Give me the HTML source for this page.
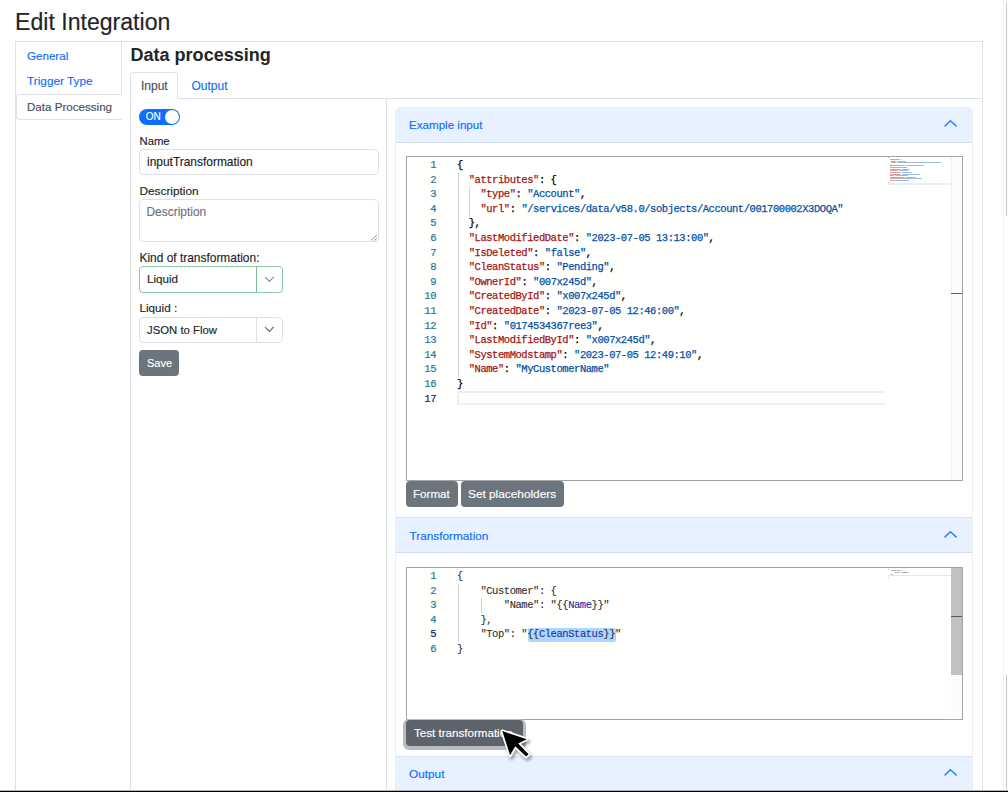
<!DOCTYPE html>
<html><head><meta charset="utf-8">
<style>
html,body{margin:0;padding:0;background:#fff;width:1008px;height:792px;overflow:hidden;position:relative;font-family:"Liberation Sans",sans-serif;color:#212529;}
.a{position:absolute;}
.t{position:absolute;white-space:nowrap;line-height:1;-webkit-text-stroke:0.15px currentColor;}
.bd{border:1px solid #dee2e6;box-sizing:border-box;}
.lnk{color:#0d6efd;}
.btn{position:absolute;background:#6c757d;border-radius:4px;color:#fff;box-sizing:border-box;}
.ed{position:absolute;background:#fffffe;border:1px solid #a4a4a4;box-sizing:border-box;overflow:hidden;}
.code{position:absolute;font-family:"Liberation Mono",monospace;font-size:10.5px;letter-spacing:-0.45px;line-height:14.59px;white-space:pre;color:#000;-webkit-text-stroke:0.25px currentColor;}
.ln{position:absolute;font-family:"Liberation Mono",monospace;font-size:10.5px;letter-spacing:-0.45px;line-height:14.59px;white-space:pre;color:#237893;text-align:right;-webkit-text-stroke:0.2px currentColor;}
.k{color:#a31515;}
.s{color:#0451a5;}
.v{color:#1f2f99;}
.ig{position:absolute;width:1px;background:#d3d3d3;}
.ah{position:absolute;background:#e7f1ff;box-shadow:inset 0 -1px 0 rgba(0,0,0,.08);}
.ach{position:absolute;width:14px;height:8px;}
</style></head><body>

<!-- Title -->
<div class="t" style="left:15px;top:11px;font-size:23.1px;">Edit Integration</div>

<!-- Outer card -->
<div class="a bd" style="left:15px;top:41px;width:968px;height:800px;"></div>

<!-- left nav -->
<div class="a" style="left:121px;top:42px;width:1px;height:52px;background:#dee2e6;"></div>
<div class="t lnk" style="left:27px;top:50px;font-size:11.6px;">General</div>
<div class="t lnk" style="left:27px;top:76px;font-size:11.8px;">Trigger Type</div>
<div class="a" style="left:16px;top:94px;width:106px;height:26px;border:1px solid #dee2e6;border-right:0;border-radius:4px 0 0 4px;box-sizing:border-box;background:#fff;"></div>
<div class="t" style="left:27px;top:101px;font-size:11.6px;color:#495057;">Data Processing</div>

<!-- content -->
<div class="t" style="left:130.5px;top:46px;font-size:18.05px;font-weight:bold;-webkit-text-stroke:0px;">Data processing</div>
<!-- tabs -->
<div class="a" style="left:130px;top:72px;width:48px;height:27px;border:1px solid #dee2e6;border-bottom:0;border-radius:4px 4px 0 0;box-sizing:border-box;background:#fff;"></div>
<div class="t" style="left:141px;top:80px;font-size:12px;color:#495057;">Input</div>
<div class="t lnk" style="left:191.5px;top:80px;font-size:12px;">Output</div>
<!-- tab content border -->
<div class="a" style="left:178px;top:98px;width:805px;height:1px;background:#dee2e6;"></div>
<div class="a" style="left:130px;top:98px;width:1px;height:700px;background:#dee2e6;"></div>
<div class="a" style="left:386px;top:99px;width:1px;height:700px;background:#dee2e6;"></div>

<!-- form -->
<div class="a" style="left:139px;top:109px;width:41px;height:16px;border-radius:8px;background:#0d6efd;"></div>
<div class="a" style="left:165px;top:110px;width:14px;height:14px;border-radius:50%;background:#fff;"></div>
<div class="t" style="left:145.8px;top:112.2px;font-size:10px;color:#fff;">ON</div>

<div class="t" style="left:139.5px;top:136px;font-size:11.3px;">Name</div>
<div class="a" style="left:139px;top:149px;width:240px;height:26px;border:1px solid #dee2e6;border-radius:4px;box-sizing:border-box;"></div>
<div class="t" style="left:147px;top:157px;font-size:11.95px;">inputTransformation</div>

<div class="t" style="left:139.5px;top:186px;font-size:11.8px;">Description</div>
<div class="a" style="left:139px;top:199px;width:240px;height:43px;border:1px solid #dee2e6;border-radius:4px;box-sizing:border-box;"></div>
<div class="t" style="left:146.5px;top:207px;font-size:11.95px;color:#6c757d;">Description</div>
<svg class="a" style="left:368px;top:232px;width:12px;height:12px;" viewBox="0 0 12 12"><path d="M3 8.3 L8.7 3.3 M6.3 8.3 L8.7 6.3" fill="none" stroke="#9a9a9a" stroke-width="1" stroke-linecap="round"/></svg>

<div class="t" style="left:139.5px;top:253px;font-size:11.93px;">Kind of transformation:</div>
<div class="a" style="left:139px;top:266px;width:144px;height:26.5px;border:1px solid #8cc5a5;border-radius:4px;box-sizing:border-box;"></div>
<div class="a" style="left:256px;top:267px;width:1px;height:25px;background:#7dbb98;"></div>
<svg class="a" style="left:264px;top:276px;width:11px;height:7px;" viewBox="0 0 11 7"><path d="M1 1.1 L5.4 5.3 L9.75 0.9" fill="none" stroke="#8a8f96" stroke-width="1.2"/></svg>
<div class="t" style="left:147px;top:273px;font-size:11.65px;">Liquid</div>

<div class="t" style="left:139.5px;top:302.4px;font-size:11.7px;">Liquid :</div>
<div class="a" style="left:139px;top:317px;width:144px;height:26px;border:1px solid #dee2e6;border-radius:4px;box-sizing:border-box;"></div>
<div class="a" style="left:256px;top:318px;width:1px;height:24px;background:#dee2e6;"></div>
<svg class="a" style="left:264px;top:325.5px;width:11px;height:7px;" viewBox="0 0 11 7"><path d="M1 1.1 L5.4 5.3 L9.75 0.9" fill="none" stroke="#6c7075" stroke-width="1.2"/></svg>
<div class="t" style="left:147px;top:325px;font-size:11.35px;">JSON to Flow</div>

<div class="btn" style="left:139px;top:350px;width:40px;height:26px;"></div>
<div class="t" style="left:147px;top:357.5px;font-size:11px;color:#fff;">Save</div>

<!-- ===== Accordion ===== -->
<div class="a" style="left:395px;top:107px;width:578px;height:700px;border:1px solid #eceef1;border-radius:5px;box-sizing:border-box;"></div>
<!-- header 1 -->
<div class="ah" style="left:396px;top:108px;width:576px;height:35px;border-radius:4px 4px 0 0;"></div>
<div class="t" style="left:409px;top:119px;font-size:11.6px;color:#0d6efd;">Example input</div>
<svg class="ach" style="left:944px;top:120px;" viewBox="0 0 14 8"><path d="M1.1 5.9 L6.4 0.7 L12.1 5.9" fill="none" stroke="#2f83fd" stroke-width="1.5" stroke-linecap="round" stroke-linejoin="round"/></svg>

<!-- editor 1 -->
<div class="ed" style="left:406px;top:156px;width:557px;height:325px;">
<div class="ln" style="left:0;top:1px;width:29px;">1
2
3
4
5
6
7
8
9
10
11
12
13
14
15
16
<span style="color:#0b216f">17</span></div>
<div class="ig" style="left:51px;top:16px;height:204px;"></div>
<div class="ig" style="left:62px;top:30px;height:30px;"></div>
<div class="a" style="left:50px;top:234px;width:428px;height:14px;border:2px solid #eeeeee;border-right:0;box-sizing:border-box;"></div>
<div class="code" style="left:50px;top:1px;">{
  <span class="k">"attributes"</span>: {
    <span class="k">"type"</span>: <span class="s">"Account"</span>,
    <span class="k">"url"</span>: <span class="s">"/services/data/v58.0/sobjects/Account/001700002X3DOQA"</span>
  },
  <span class="k">"LastModifiedDate"</span>: <span class="s">"2023-07-05 13:13:00"</span>,
  <span class="k">"IsDeleted"</span>: <span class="s">"false"</span>,
  <span class="k">"CleanStatus"</span>: <span class="s">"Pending"</span>,
  <span class="k">"OwnerId"</span>: <span class="s">"007x245d"</span>,
  <span class="k">"CreatedById"</span>: <span class="s">"x007x245d"</span>,
  <span class="k">"CreatedDate"</span>: <span class="s">"2023-07-05 12:46:00"</span>,
  <span class="k">"Id"</span>: <span class="s">"0174534367ree3"</span>,
  <span class="k">"LastModifiedById"</span>: <span class="s">"x007x245d"</span>,
  <span class="k">"SystemModstamp"</span>: <span class="s">"2023-07-05 12:49:10"</span>,
  <span class="k">"Name"</span>: <span class="s">"MyCustomerName"</span>
}
</div>
<!-- scrollbar track -->
<div class="a" style="left:544px;top:0;width:11px;height:323px;background:#fcfcfc;border-left:1px solid #f0f0f0;box-sizing:border-box;"></div>
<div class="a" style="left:544px;top:136px;width:11px;height:1px;background:#5a5a5a;"></div>
<!-- minimap -->
<div class="a" style="left:481.20px;top:0.30px;width:0.80px;height:1px;background:rgba(0,0,0,.25);"></div>
<div class="a" style="left:482.80px;top:1.93px;width:9.60px;height:1px;background:rgba(163,21,21,.4);"></div>
<div class="a" style="left:492.40px;top:1.93px;width:0.80px;height:1px;background:rgba(0,0,0,.25);"></div>
<div class="a" style="left:494.00px;top:1.93px;width:0.80px;height:1px;background:rgba(0,0,0,.25);"></div>
<div class="a" style="left:484.40px;top:3.56px;width:4.80px;height:1px;background:rgba(163,21,21,.4);"></div>
<div class="a" style="left:489.20px;top:3.56px;width:0.80px;height:1px;background:rgba(0,0,0,.25);"></div>
<div class="a" style="left:490.80px;top:3.56px;width:7.20px;height:1px;background:rgba(4,81,165,.4);"></div>
<div class="a" style="left:498.00px;top:3.56px;width:0.80px;height:1px;background:rgba(0,0,0,.25);"></div>
<div class="a" style="left:484.40px;top:5.19px;width:4.00px;height:1px;background:rgba(163,21,21,.4);"></div>
<div class="a" style="left:488.40px;top:5.19px;width:0.80px;height:1px;background:rgba(0,0,0,.25);"></div>
<div class="a" style="left:490.00px;top:5.19px;width:44.00px;height:1px;background:rgba(4,81,165,.4);"></div>
<div class="a" style="left:482.80px;top:6.82px;width:1.60px;height:1px;background:rgba(0,0,0,.25);"></div>
<div class="a" style="left:482.80px;top:8.45px;width:14.40px;height:1px;background:rgba(163,21,21,.4);"></div>
<div class="a" style="left:497.20px;top:8.45px;width:0.80px;height:1px;background:rgba(0,0,0,.25);"></div>
<div class="a" style="left:498.80px;top:8.45px;width:8.80px;height:1px;background:rgba(4,81,165,.4);"></div>
<div class="a" style="left:508.40px;top:8.45px;width:7.20px;height:1px;background:rgba(4,81,165,.4);"></div>
<div class="a" style="left:515.60px;top:8.45px;width:0.80px;height:1px;background:rgba(0,0,0,.25);"></div>
<div class="a" style="left:482.80px;top:10.08px;width:8.80px;height:1px;background:rgba(163,21,21,.4);"></div>
<div class="a" style="left:491.60px;top:10.08px;width:0.80px;height:1px;background:rgba(0,0,0,.25);"></div>
<div class="a" style="left:493.20px;top:10.08px;width:5.60px;height:1px;background:rgba(4,81,165,.4);"></div>
<div class="a" style="left:498.80px;top:10.08px;width:0.80px;height:1px;background:rgba(0,0,0,.25);"></div>
<div class="a" style="left:482.80px;top:11.71px;width:10.40px;height:1px;background:rgba(163,21,21,.4);"></div>
<div class="a" style="left:493.20px;top:11.71px;width:0.80px;height:1px;background:rgba(0,0,0,.25);"></div>
<div class="a" style="left:494.80px;top:11.71px;width:7.20px;height:1px;background:rgba(4,81,165,.4);"></div>
<div class="a" style="left:502.00px;top:11.71px;width:0.80px;height:1px;background:rgba(0,0,0,.25);"></div>
<div class="a" style="left:482.80px;top:13.34px;width:7.20px;height:1px;background:rgba(163,21,21,.4);"></div>
<div class="a" style="left:490.00px;top:13.34px;width:0.80px;height:1px;background:rgba(0,0,0,.25);"></div>
<div class="a" style="left:491.60px;top:13.34px;width:8.00px;height:1px;background:rgba(4,81,165,.4);"></div>
<div class="a" style="left:499.60px;top:13.34px;width:0.80px;height:1px;background:rgba(0,0,0,.25);"></div>
<div class="a" style="left:482.80px;top:14.97px;width:10.40px;height:1px;background:rgba(163,21,21,.4);"></div>
<div class="a" style="left:493.20px;top:14.97px;width:0.80px;height:1px;background:rgba(0,0,0,.25);"></div>
<div class="a" style="left:494.80px;top:14.97px;width:8.80px;height:1px;background:rgba(4,81,165,.4);"></div>
<div class="a" style="left:503.60px;top:14.97px;width:0.80px;height:1px;background:rgba(0,0,0,.25);"></div>
<div class="a" style="left:482.80px;top:16.60px;width:10.40px;height:1px;background:rgba(163,21,21,.4);"></div>
<div class="a" style="left:493.20px;top:16.60px;width:0.80px;height:1px;background:rgba(0,0,0,.25);"></div>
<div class="a" style="left:494.80px;top:16.60px;width:8.80px;height:1px;background:rgba(4,81,165,.4);"></div>
<div class="a" style="left:504.40px;top:16.60px;width:7.20px;height:1px;background:rgba(4,81,165,.4);"></div>
<div class="a" style="left:511.60px;top:16.60px;width:0.80px;height:1px;background:rgba(0,0,0,.25);"></div>
<div class="a" style="left:482.80px;top:18.23px;width:3.20px;height:1px;background:rgba(163,21,21,.4);"></div>
<div class="a" style="left:486.00px;top:18.23px;width:0.80px;height:1px;background:rgba(0,0,0,.25);"></div>
<div class="a" style="left:487.60px;top:18.23px;width:12.80px;height:1px;background:rgba(4,81,165,.4);"></div>
<div class="a" style="left:500.40px;top:18.23px;width:0.80px;height:1px;background:rgba(0,0,0,.25);"></div>
<div class="a" style="left:482.80px;top:19.86px;width:14.40px;height:1px;background:rgba(163,21,21,.4);"></div>
<div class="a" style="left:497.20px;top:19.86px;width:0.80px;height:1px;background:rgba(0,0,0,.25);"></div>
<div class="a" style="left:498.80px;top:19.86px;width:8.80px;height:1px;background:rgba(4,81,165,.4);"></div>
<div class="a" style="left:507.60px;top:19.86px;width:0.80px;height:1px;background:rgba(0,0,0,.25);"></div>
<div class="a" style="left:482.80px;top:21.49px;width:12.80px;height:1px;background:rgba(163,21,21,.4);"></div>
<div class="a" style="left:495.60px;top:21.49px;width:0.80px;height:1px;background:rgba(0,0,0,.25);"></div>
<div class="a" style="left:497.20px;top:21.49px;width:8.80px;height:1px;background:rgba(4,81,165,.4);"></div>
<div class="a" style="left:506.80px;top:21.49px;width:7.20px;height:1px;background:rgba(4,81,165,.4);"></div>
<div class="a" style="left:514.00px;top:21.49px;width:0.80px;height:1px;background:rgba(0,0,0,.25);"></div>
<div class="a" style="left:482.80px;top:23.12px;width:4.80px;height:1px;background:rgba(163,21,21,.4);"></div>
<div class="a" style="left:487.60px;top:23.12px;width:0.80px;height:1px;background:rgba(0,0,0,.25);"></div>
<div class="a" style="left:489.20px;top:23.12px;width:12.80px;height:1px;background:rgba(4,81,165,.4);"></div>
<div class="a" style="left:481.20px;top:24.75px;width:0.80px;height:1px;background:rgba(0,0,0,.25);"></div>
<div class="a" style="left:481px;top:26px;width:63px;height:2px;background:#e6f0fb;"></div>
</div>

<div class="btn" style="left:406px;top:481px;width:52px;height:26px;"></div>
<div class="t" style="left:413px;top:488px;font-size:11.6px;color:#fff;">Format</div>
<div class="btn" style="left:461px;top:481px;width:103px;height:26px;"></div>
<div class="t" style="left:468px;top:489px;font-size:11.83px;color:#fff;">Set placeholders</div>

<!-- header 2 -->
<div class="ah" style="left:396px;top:517px;width:576px;height:36px;box-shadow:inset 0 -1px 0 rgba(0,0,0,.08), inset 0 1px 0 rgba(0,0,0,.05);"></div>
<div class="t" style="left:409.5px;top:530.6px;font-size:11.8px;color:#0d6efd;">Transformation</div>
<svg class="ach" style="left:944px;top:531px;" viewBox="0 0 14 8"><path d="M1.1 5.9 L6.4 0.7 L12.1 5.9" fill="none" stroke="#2f83fd" stroke-width="1.5" stroke-linecap="round" stroke-linejoin="round"/></svg>

<!-- editor 2 -->
<div class="ed" style="left:406px;top:567px;width:557px;height:153px;">
<div class="ln" style="left:0;top:1px;width:29px;">1
2
3
4
<span style="color:#0b216f">5</span>
6</div>
<div class="ig" style="left:51px;top:16px;height:58px;"></div>
<div class="ig" style="left:74px;top:30px;height:14.6px;"></div>
<div class="a" style="left:121px;top:59.5px;width:88px;height:14px;background:#add6ff;border-radius:2px;"></div>
<div class="code" style="left:50px;top:1px;color:#303030;-webkit-text-stroke:0.1px currentColor;">{
    "Customer": {
        "Name": "{{<span class="v">Name</span>}}"
    },
    "Top": "{{<span class="v">CleanStatus</span>}}"
}</div>
<!-- scrollbar -->
<div class="a" style="left:544px;top:0;width:11px;height:151px;background:#fcfcfc;"></div>
<div class="a" style="left:544px;top:0;width:11px;height:107px;background:#c1c1c1;"></div>
<div class="a" style="left:544px;top:48px;width:11px;height:1px;background:#5a5a5a;"></div>
<!-- minimap -->
<div class="a" style="left:481.20px;top:0.80px;width:0.80px;height:1px;background:rgba(0,0,0,.25);"></div>
<div class="a" style="left:484.40px;top:2.43px;width:8.80px;height:1px;background:rgba(0,0,0,.25);"></div>
<div class="a" style="left:494.00px;top:2.43px;width:0.80px;height:1px;background:rgba(0,0,0,.25);"></div>
<div class="a" style="left:487.60px;top:4.06px;width:5.60px;height:1px;background:rgba(0,0,0,.25);"></div>
<div class="a" style="left:494.00px;top:4.06px;width:2.40px;height:1px;background:rgba(0,0,0,.25);"></div>
<div class="a" style="left:496.40px;top:4.06px;width:3.20px;height:1px;background:rgba(0,16,128,.4);"></div>
<div class="a" style="left:499.60px;top:4.06px;width:2.40px;height:1px;background:rgba(0,0,0,.25);"></div>
<div class="a" style="left:484.40px;top:5.69px;width:1.60px;height:1px;background:rgba(0,0,0,.25);"></div>
<div class="a" style="left:484.40px;top:7.32px;width:4.80px;height:1px;background:rgba(0,0,0,.25);"></div>
<div class="a" style="left:490.00px;top:7.32px;width:2.40px;height:1px;background:rgba(0,0,0,.25);"></div>
<div class="a" style="left:492.40px;top:7.32px;width:8.80px;height:1px;background:rgba(0,16,128,.4);"></div>
<div class="a" style="left:501.20px;top:7.32px;width:2.40px;height:1px;background:rgba(0,0,0,.25);"></div>
<div class="a" style="left:481.20px;top:8.95px;width:0.80px;height:1px;background:rgba(0,0,0,.25);"></div>
<div class="a" style="left:481px;top:7px;width:63px;height:1.3px;background:#dbe8f8;"></div>
</div>

<div class="a" style="left:403px;top:719px;width:123px;height:30.5px;border-radius:6px;background:#b9bdc2;"></div>
<div class="btn" style="left:406px;top:720px;width:117px;height:26px;background:#5c636a;"></div>
<div class="t" style="left:414px;top:727px;font-size:11.6px;color:#fff;">Test transformation</div>

<!-- header 3 -->
<div class="ah" style="left:396px;top:756px;width:576px;height:34px;box-shadow:inset 0 1px 0 rgba(0,0,0,.05);"></div>
<div class="t" style="left:409px;top:768.6px;font-size:11.8px;color:#0d6efd;">Output</div>
<svg class="ach" style="left:944px;top:769px;" viewBox="0 0 14 8"><path d="M1.1 5.9 L6.4 0.7 L12.1 5.9" fill="none" stroke="#2f83fd" stroke-width="1.5" stroke-linecap="round" stroke-linejoin="round"/></svg>

<!-- right window edge -->
<div class="a" style="left:1003px;top:0;width:1px;height:792px;background:#f1f1f1;"></div>
<div class="a" style="left:1006px;top:2px;width:1px;height:214px;background:#c8c8c8;"></div>
<div class="a" style="left:1006px;top:675px;width:1px;height:117px;background:#c8c8c8;"></div>

<!-- bottom black line -->
<div class="a" style="left:0;top:790px;width:1008px;height:1px;background:#b4b4b4;"></div><div class="a" style="left:0;top:791px;width:1008px;height:1px;background:#000;"></div>

<!-- cursor -->
<svg class="a" style="left:496px;top:724px;width:40px;height:40px;overflow:visible;" viewBox="0 0 40 40">
<defs><filter id="sh" x="-50%" y="-50%" width="200%" height="200%"><feGaussianBlur stdDeviation="1.5"/></filter></defs>
<path d="M6.3 7.1 L30.8 15.2 L22.2 19.4 L32.6 30.3 L30.1 32.6 L19.2 22.2 L14.1 31.3 Z" fill="#000" stroke="#000" stroke-width="4" stroke-linejoin="round" opacity="0.35" transform="translate(1.5,2.5)" filter="url(#sh)"/>
<path d="M6.3 7.1 L30.8 15.2 L22.2 19.4 L32.6 30.3 L30.1 32.6 L19.2 22.2 L14.1 31.3 Z" fill="#fff" stroke="#fff" stroke-width="3.6" stroke-linejoin="round"/>
<path d="M6.3 7.1 L30.8 15.2 L22.2 19.4 L32.6 30.3 L30.1 32.6 L19.2 22.2 L14.1 31.3 Z" fill="#000"/>
</svg>

</body></html>
